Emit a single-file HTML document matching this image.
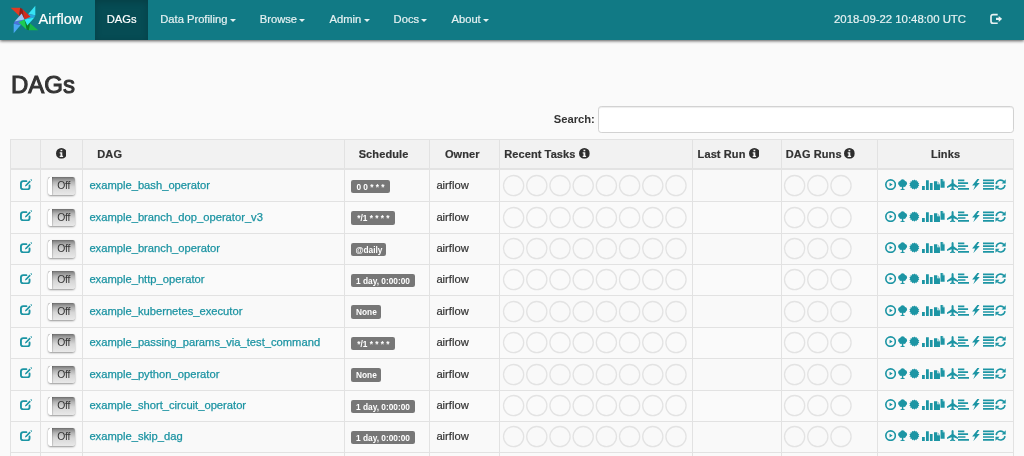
<!DOCTYPE html>
<html lang="en">
<head>
<meta charset="utf-8">
<title>Airflow - DAGs</title>
<style>
*{box-sizing:border-box}
html,body{margin:0;padding:0}
body{will-change:transform;width:1024px;height:456px;overflow:hidden;background:#fafafa;font-family:"Liberation Sans",sans-serif;font-size:11.2px;line-height:16px;color:#333}
a{color:#2098a5;text-decoration:none}
.navbar{position:absolute;left:0;top:0;width:1024px;height:40px;background:#117a85;box-shadow:0 1px 3px rgba(0,0,0,.65)}
.brand{position:absolute;left:11px;top:0;height:40px;color:#fff;font-size:14.4px;line-height:40px}
.brand svg{position:absolute;left:-0.800px;top:5.400px;width:29px;height:29px}
.brand span{position:absolute;left:27.6px;top:-1px;font-size:14.6px}
.nav{position:absolute;left:95px;top:0;height:40px;margin:0;padding:0;list-style:none;display:flex}
.nav li{height:40px;padding:11px 12px 13px;color:#e6f1f2;white-space:nowrap}
.nav li.active{background:#064c54;box-shadow:inset 0 2px 7px rgba(0,0,0,.18);color:#fff;padding-left:11.700px;padding-right:11.700px}
.caret{display:inline-block;width:0;height:0;margin-left:2.4px;vertical-align:middle;border-top:3.2px solid;border-left:3.2px solid transparent;border-right:3.2px solid transparent}
.clock{position:absolute;right:58px;top:11px;font-size:11.36px;color:#e6f1f2;white-space:nowrap}
.logout{position:absolute;left:990px;top:13px;width:12px;height:12px;fill:#e6f1f2}
h2{position:absolute;left:11px;top:72px;margin:0;font-size:24px;line-height:26px;font-weight:normal;-webkit-text-stroke:1px #333;color:#333}
.search{position:absolute;left:0;top:106px;width:1014px;height:27px}
.search label{position:absolute;right:419.200px;top:5px;font-weight:bold}
.search .inp{position:absolute;left:598px;top:0;width:416px;height:27px;background:#fff;border:1px solid #d2d2d2;border-radius:3.2px;box-shadow:inset 0 1px 1px rgba(0,0,0,.075)}
table{position:absolute;left:10px;top:139px;width:1004px;border-collapse:collapse;table-layout:fixed;border:1px solid #ddd}
th,td{border:1px solid #e2e2e2;padding:0 6.4px;vertical-align:middle;white-space:nowrap;overflow:hidden}
thead th{height:29px;background:#f2f2f2;border-bottom:2px solid #e3e3e3;font-weight:bold;text-align:center}
tbody td{height:auto}
tbody tr:nth-child(odd){background:#f9f9f9}
.c1{width:30px}.c2{width:42px}.c3{width:262px}.c4{width:85px}.c5{width:70px}.c6{width:193px}.c7{width:89px}.c8{width:96px}.c9{width:136px}

.gi{width:11.2px;height:11.2px;fill:currentColor;color:#1c95a4;display:inline-block;vertical-align:-1px}
.gi.info{color:#2d2d2d;width:10.800px;height:10.800px;vertical-align:-1px}
thead th{font-size:11px;letter-spacing:0.100px;-webkit-text-stroke:0.200px #333}
.c1{text-align:center}
.toggle{position:relative;top:0;width:27.5px;height:17.2px;border-radius:2.4px;background:linear-gradient(#6c6c6c 0,#8e8e8e 10%,#b4b4b4 28%,#d6d6d6 55%,#e9e9e9 100%);box-shadow:0 1px 2px rgba(0,0,0,.4);overflow:hidden;margin-left:0.5px}
.toggle .th{position:absolute;left:0;top:0;width:4.6px;height:100%;background:#fff;border-radius:2.4px 0 0 2.4px;box-shadow:1px 0 1px rgba(0,0,0,.15)}
.toggle .tl{position:absolute;left:4px;right:0;top:0;line-height:17.6px;text-align:center;font-size:10.400px;letter-spacing:-0.350px;color:#333}
.dl{color:#1b93a2;-webkit-text-stroke:0.250px #1b93a2}
td.c5{-webkit-text-stroke:0.200px #333}
.nav li,.clock,.brand span{-webkit-text-stroke:0.200px currentColor}
.label{display:inline-block;background:#777;color:#fff;font-weight:bold;font-size:8.300px;line-height:14.400px;height:13.800px;position:relative;top:-0.600px;padding:0;text-align:center;border-radius:2.1px;vertical-align:middle;white-space:pre}
.circs{display:block}
.circs circle{fill:none;stroke:#e3e3e3;stroke-width:1.3}
td.c9{padding-left:7.400px;font-size:0;line-height:0;text-align:left}
.lk{display:inline-block;width:12.220px;height:11.200px;vertical-align:top;position:relative;top:-1.350px}
.lk .gi{display:block;vertical-align:0}
.gi.ed{width:12px;height:11.400px;vertical-align:0.100px;position:relative;left:0.7px}
td.c6{padding-left:1.800px}td.c8{padding-left:0.700px}
tbody tr:first-child td{padding-top:1.500px}
td.c3,td.c5{padding-bottom:2px}
</style>
</head>
<body>
<svg width="0" height="0" style="position:absolute">
<defs>
<symbol id="i-edit" viewBox="0 0 12 11.400"><path d="M6.400 2.150H3.100A2.150 2.150 0 0 0 .950 4.300V8.200A2.150 2.150 0 0 0 3.100 10.350H7.400A2.150 2.150 0 0 0 9.550 8.200V6.500" fill="none" stroke="currentColor" stroke-width="1.900" stroke-linecap="round"/><path d="M4.900 7.500L5.300 5.900L9.600 1.600L10.800 2.800L6.500 7.100z M10.400 .800l.7-.7 1.200 1.200-.7 .7z"/></symbol>
<symbol id="i-info" viewBox="0 0 12 12"><path fill-rule="evenodd" d="M6 0a6 6 0 1 0 0 12a6 6 0 1 0 0-12z M5 1.9h2v1.8h-2z M4.1 4.8h2.9v3.9h.9v1.3h-3.8v-1.3h.9v-2.6h-.9z"/></symbol>
<symbol id="i-play" viewBox="0 0 12 12"><path fill-rule="evenodd" d="M6 0a6 6 0 1 0 0 12a6 6 0 1 0 0-12z M6 1.750a4.250 4.250 0 1 1 0 8.500a4.250 4.250 0 1 1 0-8.500z M4.900 4l3.300 2-3.300 2z"/></symbol>
<symbol id="i-tree" viewBox="0 0 12 12"><path d="M6 0.2a2.7 2.7 0 0 1 2.6 2a2.6 2.6 0 0 1 1.2 4.6a2.4 2.4 0 0 1-3 1.6v2.2l1.6 .6v.8h-4.8v-.8l1.6-.6v-2.2a2.4 2.4 0 0 1-3-1.6a2.6 2.6 0 0 1 1.2-4.6a2.7 2.7 0 0 1 2.6-2z"/></symbol>
<symbol id="i-cert" viewBox="0 0 12 12"><path d="M5.70 0.50L6.68 1.71L8.09 1.04L8.44 2.56L10.00 2.57L9.66 4.09L11.06 4.78L10.10 6.00L11.06 7.22L9.66 7.91L10.00 9.43L8.44 9.44L8.09 10.96L6.68 10.29L5.70 11.50L4.72 10.29L3.31 10.96L2.96 9.44L1.40 9.43L1.74 7.91L0.34 7.22L1.30 6.00L0.34 4.78L1.74 4.09L1.40 2.57L2.96 2.56L3.31 1.04L4.72 1.71z"/></symbol>
<symbol id="i-stats" viewBox="0 0 12 12"><path d="M0 7.600h3v4.200h-3z M4.300 1.400h3v10.400h-3z M8.500 4.400h2.900v7.400h-2.900z"/></symbol>
<symbol id="i-dup" viewBox="0 0 12 12"><path d="M0 2.300h3.400v3.300h3v6.100h-6.400z M7 0h2.400v2.400h2v7h-4.400z"/><path opacity=".55" d="M3.900 2.500l2.400 2.600h-2.400z M9.800 .2l1.500 1.800h-1.500z"/></symbol>
<symbol id="i-plane" viewBox="0 0 12 12"><path d="M6 0c.8 0 1.1 .8 1.1 1.9v2.6l4.9 3.6v1.5l-4.9-1.7v2.1l1.7 1.2v.8l-2.8-.6-2.8 .6v-.8l1.7-1.2v-2.1l-4.9 1.7v-1.5l4.9-3.6v-2.6c0-1.100 .3-1.900 1.100-1.900z"/></symbol>
<symbol id="i-alignl" viewBox="0 0 12 12"><path d="M0 .6h6.8v1.800h-6.800z M0 3.600h10.800v1.800h-10.800z M0 6.600h8v1.800h-8z M0 9.600h12v1.800h-12z"/></symbol>
<symbol id="i-flash" viewBox="0 0 12 12"><path d="M6.800 0L1.200 7h3.300L2.400 12 9.400 4.400H6.100L9 0z"/></symbol>
<symbol id="i-alignj" viewBox="0 0 12 12"><path d="M0 .6h12v1.800h-12z M0 3.600h12v1.800h-12z M0 6.600h12v1.800h-12z M0 9.600h12v1.800h-12z"/></symbol>
<symbol id="i-refresh" viewBox="0 0 12 12"><path d="M1.300 5.400A4.800 4.800 0 0 1 9.600 2.800 M10.700 6.600A4.800 4.800 0 0 1 2.400 9.200" fill="none" stroke="currentColor" stroke-width="1.700"/><path d="M11.500 .4v4.400h-4.400z M.5 11.600v-4.400h4.400z"/></symbol>
</defs>
</svg>
<div class="navbar">
  <a class="brand"><svg viewBox="-14.500 -14.500 29 29"><g transform="rotate(0)"><path fill="#e23a22" d="M-13.800 -11.700H-4.300L-5.400 -3.800z"/><path fill="#9c1a12" d="M-4.300 -11.700L-2 -10.600L0 0L-5.400 -3.800z"/></g><g transform="rotate(90)"><path fill="#35e3f5" d="M-13.800 -10.800H-4.300L-5.400 -3.800z"/><path fill="#2aa6dc" d="M-4.300 -10.800L-2 -9.900L0 0L-5.400 -3.800z"/></g><g transform="rotate(180)"><path fill="#15b848" d="M-13.800 -10.800H-4.300L-5.400 -3.800z"/><path fill="#0c7f28" d="M-4.300 -10.800L-2 -9.900L0 0L-5.400 -3.800z"/></g><g transform="rotate(270)"><path fill="#4aa8f6" d="M-13.800 -10.800H-4.300L-5.400 -3.800z"/><path fill="#4c74dc" d="M-4.300 -10.800L-2 -9.900L0 0L-5.400 -3.800z"/></g><g transform="rotate(0)"><path fill="#d42a1c" d="M-2 -10.600L6 -2.800L0 0z"/></g><g transform="rotate(90)"><path fill="#2ee9f8" d="M-2 -9.900L6 -2.800L0 0z"/></g><g transform="rotate(180)"><path fill="#1ccc52" d="M-2 -9.900L6 -2.800L0 0z"/></g><g transform="rotate(270)"><path fill="#9cc8f8" d="M-2 -9.900L6 -2.800L0 0z"/></g></svg><span>Airflow</span></a>
  <ul class="nav">
    <li class="active">DAGs</li>
    <li>Data Profiling<b class="caret"></b></li>
    <li>Browse<b class="caret"></b></li>
    <li>Admin<b class="caret"></b></li>
    <li>Docs<b class="caret"></b></li>
    <li>About<b class="caret"></b></li>
  </ul>
  <span class="clock">2018-09-22 10:48:00 UTC</span>
  <svg class="logout" viewBox="0 0 12 12"><path d="M7.700 1.550H3A2 2 0 0 0 1 3.550V8.250A2 2 0 0 0 3 10.250H7.700" fill="none" stroke="#e6f1f2" stroke-width="1.700"/><path d="M6 4.700h2.700V2.900L12.200 5.900 8.700 8.900V7.100H6z"/></svg>
</div>
<h2>DAGs</h2>
<div class="search"><label>Search:</label><div class="inp"></div></div>
<table>
<thead><tr>
<th class="c1"></th>
<th class="c2" style="padding-left:5.200px"><svg class="gi info"><use href="#i-info"/></svg></th>
<th class="c3" style="text-align:left;padding-left:14.300px">DAG</th>
<th class="c4" style="text-align:left;padding-left:13.700px">Schedule</th>
<th class="c5" style="text-align:left;padding-left:14.900px">Owner</th>
<th class="c6" style="text-align:left;padding-left:4.200px">Recent Tasks <svg class="gi info" style="margin-left:0.600px"><use href="#i-info"/></svg></th>
<th class="c7" style="text-align:left;padding-left:4.600px">Last Run <svg class="gi info"><use href="#i-info"/></svg></th>
<th class="c8" style="text-align:left;padding-left:3.800px">DAG Runs <svg class="gi info" style="margin-left:-0.900px"><use href="#i-info"/></svg></th>
<th class="c9">Links</th>
</tr></thead>
<tbody>
<tr style="height:33px">
<td class="c1"><a><svg class="gi ed"><use href="#i-edit"/></svg></a></td>
<td class="c2"><div class="toggle"><span class="tl">Off</span><span class="th"></span></div></td>
<td class="c3"><a class="dl">example_bash_operator</a></td>
<td class="c4"><a class="label" style="width:38.25px">0 0 * * *</a></td>
<td class="c5">airflow</td>
<td class="c6"><svg class="circs" width="190" height="26"><circle cx="11.60" cy="12.6" r="10.1"/><circle cx="34.80" cy="12.6" r="10.1"/><circle cx="58.00" cy="12.6" r="10.1"/><circle cx="81.20" cy="12.6" r="10.1"/><circle cx="104.40" cy="12.6" r="10.1"/><circle cx="127.60" cy="12.6" r="10.1"/><circle cx="150.80" cy="12.6" r="10.1"/><circle cx="174.00" cy="12.6" r="10.1"/></svg></td>
<td class="c7"></td>
<td class="c8"><svg class="circs" width="74" height="26"><circle cx="11.60" cy="12.6" r="10.1"/><circle cx="34.80" cy="12.6" r="10.1"/><circle cx="58.00" cy="12.6" r="10.1"/></svg></td>
<td class="c9"><a class="lk"><svg class="gi"><use href="#i-play"/></svg></a><a class="lk" style="left:-0.8px"><svg class="gi"><use href="#i-tree"/></svg></a><a class="lk" style="left:-0.4px"><svg class="gi"><use href="#i-cert"/></svg></a><a class="lk"><svg class="gi"><use href="#i-stats"/></svg></a><a class="lk"><svg class="gi"><use href="#i-dup"/></svg></a><a class="lk" style="left:0.3px"><svg class="gi"><use href="#i-plane"/></svg></a><a class="lk" style="left:-0.7px"><svg class="gi"><use href="#i-alignl"/></svg></a><a class="lk" style="left:-0.4px"><svg class="gi"><use href="#i-flash"/></svg></a><a class="lk" style="left:-0.6px"><svg class="gi"><use href="#i-alignj"/></svg></a><a class="lk" style="left:-0.4px"><svg class="gi"><use href="#i-refresh"/></svg></a></td>
</tr>
<tr style="height:32px">
<td class="c1"><a><svg class="gi ed"><use href="#i-edit"/></svg></a></td>
<td class="c2"><div class="toggle"><span class="tl">Off</span><span class="th"></span></div></td>
<td class="c3"><a class="dl">example_branch_dop_operator_v3</a></td>
<td class="c4"><a class="label" style="width:44px">*/1 * * * *</a></td>
<td class="c5">airflow</td>
<td class="c6"><svg class="circs" width="190" height="26"><circle cx="11.60" cy="12.6" r="10.1"/><circle cx="34.80" cy="12.6" r="10.1"/><circle cx="58.00" cy="12.6" r="10.1"/><circle cx="81.20" cy="12.6" r="10.1"/><circle cx="104.40" cy="12.6" r="10.1"/><circle cx="127.60" cy="12.6" r="10.1"/><circle cx="150.80" cy="12.6" r="10.1"/><circle cx="174.00" cy="12.6" r="10.1"/></svg></td>
<td class="c7"></td>
<td class="c8"><svg class="circs" width="74" height="26"><circle cx="11.60" cy="12.6" r="10.1"/><circle cx="34.80" cy="12.6" r="10.1"/><circle cx="58.00" cy="12.6" r="10.1"/></svg></td>
<td class="c9"><a class="lk"><svg class="gi"><use href="#i-play"/></svg></a><a class="lk" style="left:-0.8px"><svg class="gi"><use href="#i-tree"/></svg></a><a class="lk" style="left:-0.4px"><svg class="gi"><use href="#i-cert"/></svg></a><a class="lk"><svg class="gi"><use href="#i-stats"/></svg></a><a class="lk"><svg class="gi"><use href="#i-dup"/></svg></a><a class="lk" style="left:0.3px"><svg class="gi"><use href="#i-plane"/></svg></a><a class="lk" style="left:-0.7px"><svg class="gi"><use href="#i-alignl"/></svg></a><a class="lk" style="left:-0.4px"><svg class="gi"><use href="#i-flash"/></svg></a><a class="lk" style="left:-0.6px"><svg class="gi"><use href="#i-alignj"/></svg></a><a class="lk" style="left:-0.4px"><svg class="gi"><use href="#i-refresh"/></svg></a></td>
</tr>
<tr style="height:31px">
<td class="c1"><a><svg class="gi ed"><use href="#i-edit"/></svg></a></td>
<td class="c2"><div class="toggle"><span class="tl">Off</span><span class="th"></span></div></td>
<td class="c3"><a class="dl">example_branch_operator</a></td>
<td class="c4"><a class="label" style="width:35px">@daily</a></td>
<td class="c5">airflow</td>
<td class="c6"><svg class="circs" width="190" height="26"><circle cx="11.60" cy="12.6" r="10.1"/><circle cx="34.80" cy="12.6" r="10.1"/><circle cx="58.00" cy="12.6" r="10.1"/><circle cx="81.20" cy="12.6" r="10.1"/><circle cx="104.40" cy="12.6" r="10.1"/><circle cx="127.60" cy="12.6" r="10.1"/><circle cx="150.80" cy="12.6" r="10.1"/><circle cx="174.00" cy="12.6" r="10.1"/></svg></td>
<td class="c7"></td>
<td class="c8"><svg class="circs" width="74" height="26"><circle cx="11.60" cy="12.6" r="10.1"/><circle cx="34.80" cy="12.6" r="10.1"/><circle cx="58.00" cy="12.6" r="10.1"/></svg></td>
<td class="c9"><a class="lk"><svg class="gi"><use href="#i-play"/></svg></a><a class="lk" style="left:-0.8px"><svg class="gi"><use href="#i-tree"/></svg></a><a class="lk" style="left:-0.4px"><svg class="gi"><use href="#i-cert"/></svg></a><a class="lk"><svg class="gi"><use href="#i-stats"/></svg></a><a class="lk"><svg class="gi"><use href="#i-dup"/></svg></a><a class="lk" style="left:0.3px"><svg class="gi"><use href="#i-plane"/></svg></a><a class="lk" style="left:-0.7px"><svg class="gi"><use href="#i-alignl"/></svg></a><a class="lk" style="left:-0.4px"><svg class="gi"><use href="#i-flash"/></svg></a><a class="lk" style="left:-0.6px"><svg class="gi"><use href="#i-alignj"/></svg></a><a class="lk" style="left:-0.4px"><svg class="gi"><use href="#i-refresh"/></svg></a></td>
</tr>
<tr style="height:31px">
<td class="c1"><a><svg class="gi ed"><use href="#i-edit"/></svg></a></td>
<td class="c2"><div class="toggle"><span class="tl">Off</span><span class="th"></span></div></td>
<td class="c3"><a class="dl">example_http_operator</a></td>
<td class="c4"><a class="label" style="width:63.2px">1 day, 0:00:00</a></td>
<td class="c5">airflow</td>
<td class="c6"><svg class="circs" width="190" height="26"><circle cx="11.60" cy="12.6" r="10.1"/><circle cx="34.80" cy="12.6" r="10.1"/><circle cx="58.00" cy="12.6" r="10.1"/><circle cx="81.20" cy="12.6" r="10.1"/><circle cx="104.40" cy="12.6" r="10.1"/><circle cx="127.60" cy="12.6" r="10.1"/><circle cx="150.80" cy="12.6" r="10.1"/><circle cx="174.00" cy="12.6" r="10.1"/></svg></td>
<td class="c7"></td>
<td class="c8"><svg class="circs" width="74" height="26"><circle cx="11.60" cy="12.6" r="10.1"/><circle cx="34.80" cy="12.6" r="10.1"/><circle cx="58.00" cy="12.6" r="10.1"/></svg></td>
<td class="c9"><a class="lk"><svg class="gi"><use href="#i-play"/></svg></a><a class="lk" style="left:-0.8px"><svg class="gi"><use href="#i-tree"/></svg></a><a class="lk" style="left:-0.4px"><svg class="gi"><use href="#i-cert"/></svg></a><a class="lk"><svg class="gi"><use href="#i-stats"/></svg></a><a class="lk"><svg class="gi"><use href="#i-dup"/></svg></a><a class="lk" style="left:0.3px"><svg class="gi"><use href="#i-plane"/></svg></a><a class="lk" style="left:-0.7px"><svg class="gi"><use href="#i-alignl"/></svg></a><a class="lk" style="left:-0.4px"><svg class="gi"><use href="#i-flash"/></svg></a><a class="lk" style="left:-0.6px"><svg class="gi"><use href="#i-alignj"/></svg></a><a class="lk" style="left:-0.4px"><svg class="gi"><use href="#i-refresh"/></svg></a></td>
</tr>
<tr style="height:32px">
<td class="c1"><a><svg class="gi ed"><use href="#i-edit"/></svg></a></td>
<td class="c2"><div class="toggle"><span class="tl">Off</span><span class="th"></span></div></td>
<td class="c3"><a class="dl">example_kubernetes_executor</a></td>
<td class="c4"><a class="label" style="width:30.1px">None</a></td>
<td class="c5">airflow</td>
<td class="c6"><svg class="circs" width="190" height="26"><circle cx="11.60" cy="12.6" r="10.1"/><circle cx="34.80" cy="12.6" r="10.1"/><circle cx="58.00" cy="12.6" r="10.1"/><circle cx="81.20" cy="12.6" r="10.1"/><circle cx="104.40" cy="12.6" r="10.1"/><circle cx="127.60" cy="12.6" r="10.1"/><circle cx="150.80" cy="12.6" r="10.1"/><circle cx="174.00" cy="12.6" r="10.1"/></svg></td>
<td class="c7"></td>
<td class="c8"><svg class="circs" width="74" height="26"><circle cx="11.60" cy="12.6" r="10.1"/><circle cx="34.80" cy="12.6" r="10.1"/><circle cx="58.00" cy="12.6" r="10.1"/></svg></td>
<td class="c9"><a class="lk"><svg class="gi"><use href="#i-play"/></svg></a><a class="lk" style="left:-0.8px"><svg class="gi"><use href="#i-tree"/></svg></a><a class="lk" style="left:-0.4px"><svg class="gi"><use href="#i-cert"/></svg></a><a class="lk"><svg class="gi"><use href="#i-stats"/></svg></a><a class="lk"><svg class="gi"><use href="#i-dup"/></svg></a><a class="lk" style="left:0.3px"><svg class="gi"><use href="#i-plane"/></svg></a><a class="lk" style="left:-0.7px"><svg class="gi"><use href="#i-alignl"/></svg></a><a class="lk" style="left:-0.4px"><svg class="gi"><use href="#i-flash"/></svg></a><a class="lk" style="left:-0.6px"><svg class="gi"><use href="#i-alignj"/></svg></a><a class="lk" style="left:-0.4px"><svg class="gi"><use href="#i-refresh"/></svg></a></td>
</tr>
<tr style="height:31px">
<td class="c1"><a><svg class="gi ed"><use href="#i-edit"/></svg></a></td>
<td class="c2"><div class="toggle"><span class="tl">Off</span><span class="th"></span></div></td>
<td class="c3"><a class="dl">example_passing_params_via_test_command</a></td>
<td class="c4"><a class="label" style="width:44px">*/1 * * * *</a></td>
<td class="c5">airflow</td>
<td class="c6"><svg class="circs" width="190" height="26"><circle cx="11.60" cy="12.6" r="10.1"/><circle cx="34.80" cy="12.6" r="10.1"/><circle cx="58.00" cy="12.6" r="10.1"/><circle cx="81.20" cy="12.6" r="10.1"/><circle cx="104.40" cy="12.6" r="10.1"/><circle cx="127.60" cy="12.6" r="10.1"/><circle cx="150.80" cy="12.6" r="10.1"/><circle cx="174.00" cy="12.6" r="10.1"/></svg></td>
<td class="c7"></td>
<td class="c8"><svg class="circs" width="74" height="26"><circle cx="11.60" cy="12.6" r="10.1"/><circle cx="34.80" cy="12.6" r="10.1"/><circle cx="58.00" cy="12.6" r="10.1"/></svg></td>
<td class="c9"><a class="lk"><svg class="gi"><use href="#i-play"/></svg></a><a class="lk" style="left:-0.8px"><svg class="gi"><use href="#i-tree"/></svg></a><a class="lk" style="left:-0.4px"><svg class="gi"><use href="#i-cert"/></svg></a><a class="lk"><svg class="gi"><use href="#i-stats"/></svg></a><a class="lk"><svg class="gi"><use href="#i-dup"/></svg></a><a class="lk" style="left:0.3px"><svg class="gi"><use href="#i-plane"/></svg></a><a class="lk" style="left:-0.7px"><svg class="gi"><use href="#i-alignl"/></svg></a><a class="lk" style="left:-0.4px"><svg class="gi"><use href="#i-flash"/></svg></a><a class="lk" style="left:-0.6px"><svg class="gi"><use href="#i-alignj"/></svg></a><a class="lk" style="left:-0.4px"><svg class="gi"><use href="#i-refresh"/></svg></a></td>
</tr>
<tr style="height:32px">
<td class="c1"><a><svg class="gi ed"><use href="#i-edit"/></svg></a></td>
<td class="c2"><div class="toggle"><span class="tl">Off</span><span class="th"></span></div></td>
<td class="c3"><a class="dl">example_python_operator</a></td>
<td class="c4"><a class="label" style="width:30.1px">None</a></td>
<td class="c5">airflow</td>
<td class="c6"><svg class="circs" width="190" height="26"><circle cx="11.60" cy="12.6" r="10.1"/><circle cx="34.80" cy="12.6" r="10.1"/><circle cx="58.00" cy="12.6" r="10.1"/><circle cx="81.20" cy="12.6" r="10.1"/><circle cx="104.40" cy="12.6" r="10.1"/><circle cx="127.60" cy="12.6" r="10.1"/><circle cx="150.80" cy="12.6" r="10.1"/><circle cx="174.00" cy="12.6" r="10.1"/></svg></td>
<td class="c7"></td>
<td class="c8"><svg class="circs" width="74" height="26"><circle cx="11.60" cy="12.6" r="10.1"/><circle cx="34.80" cy="12.6" r="10.1"/><circle cx="58.00" cy="12.6" r="10.1"/></svg></td>
<td class="c9"><a class="lk"><svg class="gi"><use href="#i-play"/></svg></a><a class="lk" style="left:-0.8px"><svg class="gi"><use href="#i-tree"/></svg></a><a class="lk" style="left:-0.4px"><svg class="gi"><use href="#i-cert"/></svg></a><a class="lk"><svg class="gi"><use href="#i-stats"/></svg></a><a class="lk"><svg class="gi"><use href="#i-dup"/></svg></a><a class="lk" style="left:0.3px"><svg class="gi"><use href="#i-plane"/></svg></a><a class="lk" style="left:-0.7px"><svg class="gi"><use href="#i-alignl"/></svg></a><a class="lk" style="left:-0.4px"><svg class="gi"><use href="#i-flash"/></svg></a><a class="lk" style="left:-0.6px"><svg class="gi"><use href="#i-alignj"/></svg></a><a class="lk" style="left:-0.4px"><svg class="gi"><use href="#i-refresh"/></svg></a></td>
</tr>
<tr style="height:31px">
<td class="c1"><a><svg class="gi ed"><use href="#i-edit"/></svg></a></td>
<td class="c2"><div class="toggle"><span class="tl">Off</span><span class="th"></span></div></td>
<td class="c3"><a class="dl">example_short_circuit_operator</a></td>
<td class="c4"><a class="label" style="width:63.2px">1 day, 0:00:00</a></td>
<td class="c5">airflow</td>
<td class="c6"><svg class="circs" width="190" height="26"><circle cx="11.60" cy="12.6" r="10.1"/><circle cx="34.80" cy="12.6" r="10.1"/><circle cx="58.00" cy="12.6" r="10.1"/><circle cx="81.20" cy="12.6" r="10.1"/><circle cx="104.40" cy="12.6" r="10.1"/><circle cx="127.60" cy="12.6" r="10.1"/><circle cx="150.80" cy="12.6" r="10.1"/><circle cx="174.00" cy="12.6" r="10.1"/></svg></td>
<td class="c7"></td>
<td class="c8"><svg class="circs" width="74" height="26"><circle cx="11.60" cy="12.6" r="10.1"/><circle cx="34.80" cy="12.6" r="10.1"/><circle cx="58.00" cy="12.6" r="10.1"/></svg></td>
<td class="c9"><a class="lk"><svg class="gi"><use href="#i-play"/></svg></a><a class="lk" style="left:-0.8px"><svg class="gi"><use href="#i-tree"/></svg></a><a class="lk" style="left:-0.4px"><svg class="gi"><use href="#i-cert"/></svg></a><a class="lk"><svg class="gi"><use href="#i-stats"/></svg></a><a class="lk"><svg class="gi"><use href="#i-dup"/></svg></a><a class="lk" style="left:0.3px"><svg class="gi"><use href="#i-plane"/></svg></a><a class="lk" style="left:-0.7px"><svg class="gi"><use href="#i-alignl"/></svg></a><a class="lk" style="left:-0.4px"><svg class="gi"><use href="#i-flash"/></svg></a><a class="lk" style="left:-0.6px"><svg class="gi"><use href="#i-alignj"/></svg></a><a class="lk" style="left:-0.4px"><svg class="gi"><use href="#i-refresh"/></svg></a></td>
</tr>
<tr style="height:31px">
<td class="c1"><a><svg class="gi ed"><use href="#i-edit"/></svg></a></td>
<td class="c2"><div class="toggle"><span class="tl">Off</span><span class="th"></span></div></td>
<td class="c3"><a class="dl">example_skip_dag</a></td>
<td class="c4"><a class="label" style="width:63.2px">1 day, 0:00:00</a></td>
<td class="c5">airflow</td>
<td class="c6"><svg class="circs" width="190" height="26"><circle cx="11.60" cy="12.6" r="10.1"/><circle cx="34.80" cy="12.6" r="10.1"/><circle cx="58.00" cy="12.6" r="10.1"/><circle cx="81.20" cy="12.6" r="10.1"/><circle cx="104.40" cy="12.6" r="10.1"/><circle cx="127.60" cy="12.6" r="10.1"/><circle cx="150.80" cy="12.6" r="10.1"/><circle cx="174.00" cy="12.6" r="10.1"/></svg></td>
<td class="c7"></td>
<td class="c8"><svg class="circs" width="74" height="26"><circle cx="11.60" cy="12.6" r="10.1"/><circle cx="34.80" cy="12.6" r="10.1"/><circle cx="58.00" cy="12.6" r="10.1"/></svg></td>
<td class="c9"><a class="lk"><svg class="gi"><use href="#i-play"/></svg></a><a class="lk" style="left:-0.8px"><svg class="gi"><use href="#i-tree"/></svg></a><a class="lk" style="left:-0.4px"><svg class="gi"><use href="#i-cert"/></svg></a><a class="lk"><svg class="gi"><use href="#i-stats"/></svg></a><a class="lk"><svg class="gi"><use href="#i-dup"/></svg></a><a class="lk" style="left:0.3px"><svg class="gi"><use href="#i-plane"/></svg></a><a class="lk" style="left:-0.7px"><svg class="gi"><use href="#i-alignl"/></svg></a><a class="lk" style="left:-0.4px"><svg class="gi"><use href="#i-flash"/></svg></a><a class="lk" style="left:-0.6px"><svg class="gi"><use href="#i-alignj"/></svg></a><a class="lk" style="left:-0.4px"><svg class="gi"><use href="#i-refresh"/></svg></a></td>
</tr>
<tr style="height:32px">
<td class="c1"><a><svg class="gi ed"><use href="#i-edit"/></svg></a></td>
<td class="c2"><div class="toggle"><span class="tl">Off</span><span class="th"></span></div></td>
<td class="c3"><a class="dl">example_subdag_operator</a></td>
<td class="c4"><a class="label" style="width:36px">@once</a></td>
<td class="c5">airflow</td>
<td class="c6"><svg class="circs" width="190" height="26"><circle cx="11.60" cy="12.6" r="10.1"/><circle cx="34.80" cy="12.6" r="10.1"/><circle cx="58.00" cy="12.6" r="10.1"/><circle cx="81.20" cy="12.6" r="10.1"/><circle cx="104.40" cy="12.6" r="10.1"/><circle cx="127.60" cy="12.6" r="10.1"/><circle cx="150.80" cy="12.6" r="10.1"/><circle cx="174.00" cy="12.6" r="10.1"/></svg></td>
<td class="c7"></td>
<td class="c8"><svg class="circs" width="74" height="26"><circle cx="11.60" cy="12.6" r="10.1"/><circle cx="34.80" cy="12.6" r="10.1"/><circle cx="58.00" cy="12.6" r="10.1"/></svg></td>
<td class="c9"><a class="lk"><svg class="gi"><use href="#i-play"/></svg></a><a class="lk" style="left:-0.8px"><svg class="gi"><use href="#i-tree"/></svg></a><a class="lk" style="left:-0.4px"><svg class="gi"><use href="#i-cert"/></svg></a><a class="lk"><svg class="gi"><use href="#i-stats"/></svg></a><a class="lk"><svg class="gi"><use href="#i-dup"/></svg></a><a class="lk" style="left:0.3px"><svg class="gi"><use href="#i-plane"/></svg></a><a class="lk" style="left:-0.7px"><svg class="gi"><use href="#i-alignl"/></svg></a><a class="lk" style="left:-0.4px"><svg class="gi"><use href="#i-flash"/></svg></a><a class="lk" style="left:-0.6px"><svg class="gi"><use href="#i-alignj"/></svg></a><a class="lk" style="left:-0.4px"><svg class="gi"><use href="#i-refresh"/></svg></a></td>
</tr>
</tbody>
</table>
</body>
</html>
